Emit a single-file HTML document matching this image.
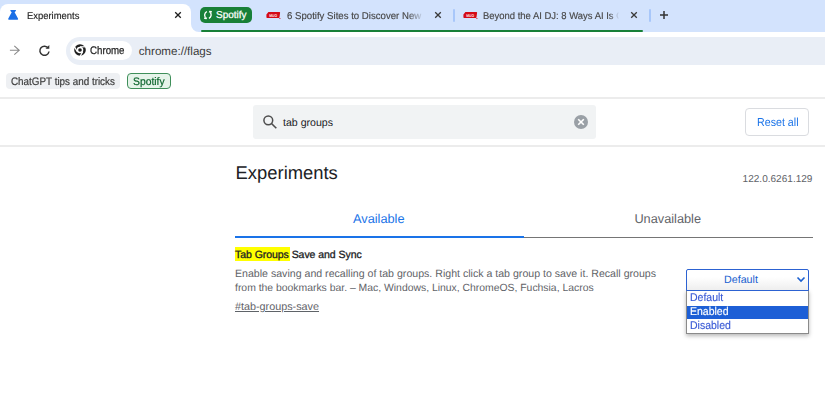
<!DOCTYPE html>
<html><head><meta charset="utf-8">
<style>
*{margin:0;padding:0;box-sizing:border-box}
html,body{width:825px;height:413px;overflow:hidden;background:#fff;font-family:"Liberation Sans",sans-serif;text-rendering:geometricPrecision}
.abs{position:absolute}
#strip{position:absolute;left:0;top:0;width:825px;height:31.5px;background:#d3e3fd}
#tab1{position:absolute;left:0;top:4px;width:191px;height:28px;background:#fff;border-radius:8px 8px 0 0}
.t{position:absolute;white-space:nowrap;line-height:1}
#toolbar{position:absolute;left:0;top:31.5px;width:825px;height:66.5px;background:#fff}
#omni{position:absolute;left:66px;top:36.5px;width:800px;height:28px;border-radius:14px;background:#e9eef6}
#chip{position:absolute;left:70px;top:41px;width:62px;height:19px;border-radius:10px;background:#fff}
#divider{position:absolute;left:0;top:97px;width:825px;height:2px;background:#ececec}
#hdrline{position:absolute;left:0;top:145px;width:825px;height:2px;background:#ececec}
#search{position:absolute;left:253px;top:105px;width:342.6px;height:34px;background:#f1f3f4;border-radius:3px}
#reset{position:absolute;left:745px;top:108px;width:64px;height:28px;border:1px solid #dadce0;border-radius:4px;background:#fff}
#sel{position:absolute;left:685.6px;top:269px;width:123.4px;height:22px;border:1px solid #2c62d2;border-radius:2px 2px 0 0;background:linear-gradient(#fff 35%,#eeeeee)}
#list{position:absolute;left:685.6px;top:290px;width:123.4px;height:44px;border:1px solid #8a8a8a;background:#fff;box-shadow:0 2px 4px rgba(0,0,0,.28)}
</style></head><body>
<div id="strip"></div>
<div id="tab1"></div>
<!-- flared bottom-right of active tab -->
<svg class="abs" style="left:191px;top:24px" width="9" height="9"><path d="M0 0 A8 8 0 0 0 8 8 L0 8 Z" fill="#fff"/></svg>
<!-- flask -->
<svg class="abs" style="left:4px;top:6px" width="18" height="18" viewBox="0 0 18 18"><path d="M6.4 3.9 H11.9 V4.9 L10.6 6.2 L14 12.4 Q14.6 13.7 13.2 13.7 H5.1 Q3.7 13.7 4.3 12.4 L7.7 6.2 L6.4 4.9 Z" fill="#1a6fe6"/></svg>
<div class="t" style="left:27px;top:12px;font-size:9.9px;color:#1f1f1f;transform:scaleX(0.954);transform-origin:0 0;-webkit-text-stroke:0.15px #1f1f1f">Experiments</div>
<svg class="abs" style="left:173px;top:10px" width="10" height="10"><path d="M2.2 2.2 L7.8 7.8 M7.8 2.2 L2.2 7.8" stroke="#1f1f1f" stroke-width="1.3"/></svg>
<!-- group chip -->
<div class="abs" style="left:200px;top:7px;width:52px;height:16px;border-radius:5px;background:#188038"></div>
<svg class="abs" style="left:203px;top:10px" width="10" height="10" viewBox="0 0 10 10"><path d="M3.9 1.7 A3.7 3.7 0 0 0 2.6 7.6 M5.9 8.3 A3.7 3.7 0 0 0 7.2 2.4" stroke="#fff" stroke-width="1.35" fill="none"/><path d="M1.1 7.4 L4.2 7.6 L3.6 9.2 L1.2 9.1 Z M8.9 2.6 L5.8 2.4 L6.4 0.8 L8.8 0.9 Z" fill="#fff"/></svg>
<div class="t" style="left:216px;top:11.1px;font-size:10px;color:#fff;-webkit-text-stroke:0.25px #fff">Spotify</div>
<div class="abs" style="left:201px;top:30px;width:442px;height:2px;background:#188038;border-radius:1px"></div>
<!-- tab 2 -->
<svg class="abs" style="left:265px;top:11px" width="16" height="9" viewBox="0 0 16 9"><path d="M1.4 3.4 L3.4 1.1 H14.5 Q15.2 1.1 15.1 1.8 L14.5 6.2 Q14.4 6.9 13.7 6.9 H2.1 Q1.4 6.9 1.4 6.2 Z" fill="#d40a16"/><circle cx="14.9" cy="7.5" r="0.6" fill="#d40a16"/><text x="4.2" y="5.6" font-size="4" font-family="Liberation Sans" font-weight="bold" fill="#ffe4e6" letter-spacing="0.05" textLength="8" lengthAdjust="spacingAndGlyphs">MUO</text></svg>
<div class="t" style="left:286.5px;top:12px;height:14px;width:137px;overflow:hidden;-webkit-mask-image:linear-gradient(90deg,#000 calc(100% - 16px),transparent)"><div style="font-size:9.9px;color:#474747;transform:scaleX(0.974);transform-origin:0 0;-webkit-text-stroke:0.15px #474747">6 Spotify Sites to Discover New Music</div></div>
<svg class="abs" style="left:433px;top:10px" width="10" height="10"><path d="M2.2 2.2 L7.8 7.8 M7.8 2.2 L2.2 7.8" stroke="#3a3a3a" stroke-width="1.3"/></svg>
<div class="abs" style="left:453px;top:8.7px;width:1.7px;height:13px;background:#a8c7fa;border-radius:1px"></div>
<!-- tab 3 -->
<svg class="abs" style="left:461.6px;top:11px" width="16" height="9" viewBox="0 0 16 9"><path d="M1.4 3.4 L3.4 1.1 H14.5 Q15.2 1.1 15.1 1.8 L14.5 6.2 Q14.4 6.9 13.7 6.9 H2.1 Q1.4 6.9 1.4 6.2 Z" fill="#d40a16"/><circle cx="14.9" cy="7.5" r="0.6" fill="#d40a16"/><text x="4.2" y="5.6" font-size="4" font-family="Liberation Sans" font-weight="bold" fill="#ffe4e6" letter-spacing="0.05" textLength="8" lengthAdjust="spacingAndGlyphs">MUO</text></svg>
<div class="t" style="left:483px;top:12px;height:14px;width:136px;overflow:hidden;-webkit-mask-image:linear-gradient(90deg,#000 calc(100% - 9px),transparent)"><div style="font-size:9.9px;color:#474747;transform:scaleX(0.958);transform-origin:0 0;-webkit-text-stroke:0.15px #474747">Beyond the AI DJ: 8 Ways AI Is Changing</div></div>
<svg class="abs" style="left:629.2px;top:10px" width="10" height="10"><path d="M2.2 2.2 L7.8 7.8 M7.8 2.2 L2.2 7.8" stroke="#3a3a3a" stroke-width="1.3"/></svg>
<div class="abs" style="left:649px;top:8.7px;width:1.7px;height:13px;background:#a8c7fa;border-radius:1px"></div>
<svg class="abs" style="left:658px;top:9px" width="12" height="12"><path d="M6 2 V10 M2 6 H10" stroke="#333" stroke-width="1.5"/></svg>

<div id="toolbar"></div>
<!-- forward -->
<svg class="abs" style="left:9px;top:45px" width="12" height="12" viewBox="0 0 12 12"><path d="M0.9 5.3 H10.4 M5.3 0.9 L10.2 5.3 L5.3 9.7" stroke="#8a8a8a" stroke-width="1.1" fill="none"/></svg>
<!-- reload -->
<svg class="abs" style="left:38px;top:43.7px" width="13" height="13" viewBox="0 0 13 13"><path d="M10.3 4.2 A4.6 4.6 0 1 0 11 7.5" stroke="#333" stroke-width="1.5" fill="none"/><path d="M7.5 4.8 H11.3 V1 Z" fill="#333"/></svg>
<div id="omni"></div>
<div id="chip"></div>
<svg class="abs" style="left:74px;top:44.4px" width="12" height="12" viewBox="0 0 24 24"><circle cx="12" cy="12" r="11.6" fill="#1f1f1f"/><circle cx="12" cy="12" r="6.6" fill="#fff"/><circle cx="12" cy="12" r="3.6" fill="#1f1f1f"/><g stroke="#fff" stroke-width="2.3"><path d="M12 5.6 H24"/><path d="M12 5.6 H24" transform="rotate(120 12 12)"/><path d="M12 5.6 H24" transform="rotate(240 12 12)"/></g></svg>
<div class="t" style="left:90.4px;top:46.2px;font-size:11px;color:#1f1f1f;transform:scaleX(0.882);transform-origin:0 0;-webkit-text-stroke:0.25px #1f1f1f">Chrome</div>
<div class="t" style="left:138.8px;top:45.8px;font-size:11.6px;color:#3a3a3a">chrome://flags</div>

<!-- bookmarks -->
<div class="abs" style="left:6px;top:73px;width:114px;height:16px;border-radius:4px;background:#eef0f3"></div>
<div class="t" style="left:10.7px;top:76.6px;font-size:10.9px;color:#3c3c3c;transform:scaleX(0.905);transform-origin:0 0;-webkit-text-stroke:0.2px #3c3c3c">ChatGPT tips and tricks</div>
<div class="abs" style="left:127px;top:73px;width:44px;height:16px;border-radius:4px;background:#e6f4ea;border:1.3px solid #3f8f5a"></div>
<div class="t" style="left:133px;top:76.6px;font-size:10.9px;color:#0d652d;transform:scaleX(0.951);transform-origin:0 0;-webkit-text-stroke:0.2px #0d652d">Spotify</div>
<div id="divider"></div>

<!-- flags header -->
<div id="search"></div>
<svg class="abs" style="left:261.6px;top:114px" width="16" height="16" viewBox="0 0 16 16"><circle cx="6.3" cy="6.3" r="4.4" stroke="#4d4d4d" stroke-width="1.5" fill="none"/><path d="M9.5 9.5 L14.3 14.3" stroke="#4d4d4d" stroke-width="1.6"/></svg>
<div class="t" style="left:283px;top:118.2px;font-size:10.6px;color:#202124">tab groups</div>
<svg class="abs" style="left:573px;top:114px" width="16" height="16" viewBox="0 0 16 16"><circle cx="8" cy="8" r="7" fill="#9aa0a6"/><path d="M5.2 5.2 L10.8 10.8 M10.8 5.2 L5.2 10.8" stroke="#fff" stroke-width="1.6"/></svg>
<div id="reset"></div>
<div class="t" style="left:757px;top:116.6px;font-size:11.6px;color:#1a73e8;transform:scaleX(0.92);transform-origin:0 0">Reset all</div>
<div id="hdrline"></div>

<div class="t" style="left:235.6px;top:164px;font-size:18.4px;color:#202124">Experiments</div>
<div class="t" style="left:742.6px;top:175px;font-size:10.05px;color:#5f6368">122.0.6261.129</div>

<div class="t" style="left:353px;top:212.7px;font-size:12.75px;color:#1a73e8">Available</div>
<div class="t" style="left:634.4px;top:212.7px;font-size:12.75px;color:#5f6368">Unavailable</div>
<div class="abs" style="left:235px;top:236px;width:289px;height:2px;background:#1a73e8"></div>
<div class="abs" style="left:524px;top:237px;width:289px;height:1px;background:#757575"></div>

<div class="abs" style="left:235px;top:247px;width:55px;height:14px;background:#ffff00"></div>
<div class="t" style="left:235px;top:249.7px;font-size:10.5px;color:#202124;-webkit-text-stroke:0.3px #202124;letter-spacing:-0.05px">Tab Groups Save and Sync</div>
<div class="t" style="left:235px;top:269px;font-size:10.6px;color:#5f6368">Enable saving and recalling of tab groups. Right click a tab group to save it. Recall groups</div>
<div class="t" style="left:235px;top:284.2px;font-size:10.4px;color:#5f6368">from the bookmarks bar. – Mac, Windows, Linux, ChromeOS, Fuchsia, Lacros</div>
<div class="t" style="left:235px;top:302px;font-size:10.8px;color:#5f6368;text-decoration:underline;text-underline-offset:1px">#tab-groups-save</div>

<!-- select -->
<div id="list"></div>
<div id="sel"></div>
<div class="t" style="left:724px;top:274.5px;font-size:10.7px;color:#1a5fd0">Default</div>
<svg class="abs" style="left:796px;top:276px" width="10" height="7" viewBox="0 0 10 7"><path d="M1.5 1.5 L5 5 L8.5 1.5" stroke="#1a5fd0" stroke-width="1.6" fill="none"/></svg>
<div class="t" style="left:690px;top:293.2px;font-size:11.3px;color:#3b5bd6;transform:scaleX(0.93);transform-origin:0 0;-webkit-text-stroke:0.15px #3b5bd6">Default</div>
<div class="abs" style="left:686.6px;top:305.5px;width:121.4px;height:13px;background:#1d5fd6"></div>
<div class="t" style="left:690px;top:307.1px;font-size:11.3px;color:#fff;transform:scaleX(0.93);transform-origin:0 0;-webkit-text-stroke:0.15px #fff">Enabled</div>
<div class="t" style="left:690px;top:320.9px;font-size:11.3px;color:#3b5bd6;transform:scaleX(0.93);transform-origin:0 0;-webkit-text-stroke:0.15px #3b5bd6">Disabled</div>
</body></html>
